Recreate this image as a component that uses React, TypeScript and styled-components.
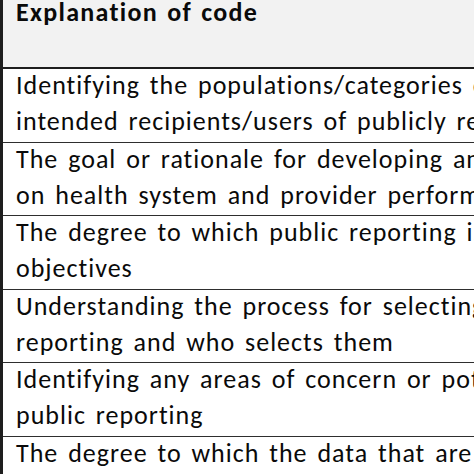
import styled, { createGlobalStyle } from 'styled-components';

const GlobalStyle = createGlobalStyle`
  html, body {
    margin: 0;
    padding: 0;
    background: #ffffff;
    overflow: hidden;
  }
`;

const rows: string[][] = [
  ['Identifying the populations/categories of', 'intended recipients/users of publicly reported data'],
  ['The goal or rationale for developing and implementing public reporting', 'on health system and provider performance'],
  ['The degree to which public reporting is achieving its', 'objectives'],
  ['Understanding the process for selecting indicators for public', 'reporting and who selects them'],
  ['Identifying any areas of concern or potential unintended consequences of', 'public reporting'],
  ['The degree to which the data that are reported are', 'used by the public'],
];

function App() {
  return (
    <>
      <GlobalStyle />
      <Table>
        <HeaderCell>Explanation of code</HeaderCell>
        {rows.map((lines, i) => (
          <Row key={i}>
            {lines.map((line, j) => (
              <Line key={j}>{line}</Line>
            ))}
          </Row>
        ))}
      </Table>
    </>
  );
}

export default App;

const Table = styled.div`
  width: 1000px;
  display: flex;
  flex-direction: column;
  border-left: 3px solid #1e1e1e;
  font-family: Carlito, Calibri, Lato, 'Liberation Sans', sans-serif;
  color: #0a0a0a;
`;

const HeaderCell = styled.div`
  height: 69px;
  box-sizing: border-box;
  padding: 0 13px;
  background: #f2f2f2;
  border-bottom: 2px solid #1e1e1e;
  font-size: 26px;
  font-weight: bold;
  line-height: 24px;
  letter-spacing: 1.3px;
  word-spacing: 2px;
`;

const Row = styled.div`
  height: 73.5px;
  flex-shrink: 0;
  box-sizing: border-box;
  padding: 1px 13px 0;
  border-bottom: 1.5px solid #2e2e2e;
  display: flex;
  flex-direction: column;
  gap: 6px;
`;

const Line = styled.span`
  font-size: 26px;
  line-height: 30px;
  letter-spacing: 1px;
  word-spacing: 3px;
  white-space: nowrap;
`;
